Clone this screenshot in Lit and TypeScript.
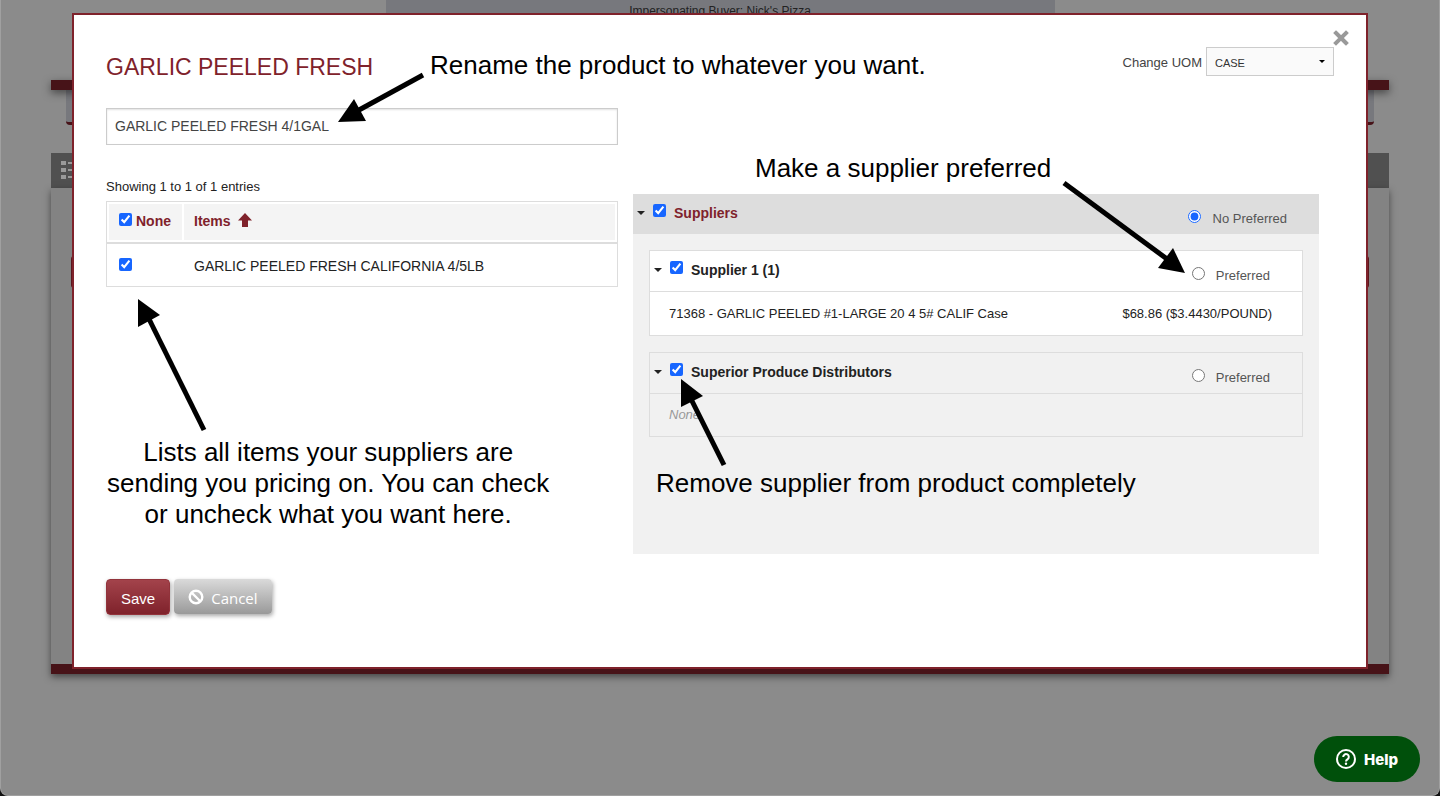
import { LitElement, html, css, svg } from "lit";
import { customElement, property } from "lit/decorators.js";

const caret = html`<svg class="caret" width="8" height="4" viewBox="0 0 8 4" aria-hidden="true">
  <path d="M0 0h8L4 4z" fill="currentColor" />
</svg>`;

interface Arrow {
  from: [number, number];
  to: [number, number];
  head: string;
}

const arrows: Arrow[] = [
  { from: [423, 75], to: [359, 110], head: "338,122 354,99 366,121" },
  { from: [1064, 183], to: [1167, 259], head: "1185,273 1173,248 1158,268" },
  { from: [204, 430], to: [149, 319], head: "138,299 160,315 138,327" },
  { from: [724, 465], to: [691, 399], head: "681,379 703,396 681,407" },
];

@customElement("supplier-card")
export class SupplierCard extends LitElement {
  @property() name = "";
  @property() item = "";
  @property() price = "";

  static styles = css`
    :host {
      display: block;
      border: 1px solid #ddd;
    }
    * {
      box-sizing: border-box;
    }
    .head {
      display: flex;
      align-items: center;
      height: 41px;
      padding: 0 32px 2px 4px;
      border-bottom: 1px solid #ddd;
    }
    .check {
      width: 13px;
      height: 13px;
      margin: 0 8px 6px 8px;
    }
    .name {
      font-size: 14px;
      font-weight: bold;
      line-height: 20px;
    }
    .preferred {
      display: flex;
      align-items: center;
      margin-left: auto;
      padding-top: 12px;
      color: #555;
      line-height: 20px;
    }
    .radio {
      width: 13px;
      height: 13px;
      margin: 0 11px 5px 0;
    }
    .row {
      display: flex;
      justify-content: space-between;
      align-items: center;
      min-height: 43px;
      padding: 0 30px 0 19px;
    }
    .empty {
      min-height: 42px;
    }
    .none {
      color: #999;
      font-style: italic;
    }
  `;

  render() {
    return html`
      <div class="head">
        ${caret}
        <input class="check" type="checkbox" id="use" checked />
        <label class="name" for="use">${this.name}</label>
        <label class="preferred"><input class="radio" type="radio" name="preferred" />Preferred</label>
      </div>
      ${this.item
        ? html`<div class="row"><span>${this.item}</span><span>${this.price}</span></div>`
        : html`<div class="row empty"><span class="none">None</span></div>`}
    `;
  }
}

@customElement("app-root")
export class AppRoot extends LitElement {
  static styles = css`
    :host {
      display: block;
      position: relative;
      min-height: 100vh;
      overflow: hidden;
      background: #111;
      color: #222;
      font: 13px/20px "Liberation Sans", Arial, sans-serif;
      accent-color: #1766ff;
    }
    * {
      box-sizing: border-box;
    }

    .page {
      min-height: 100vh;
      padding: 0 50px;
      background: #8b8b8b;
      border: solid #a0a0a0;
      border-width: 0 1px 1px;
      border-radius: 0 0 8px 8px;
    }
    .banner {
      width: 50%;
      height: 24px;
      margin: 0 auto;
      background: #77787d;
      font-size: 12px;
      line-height: 22px;
      text-align: center;
    }
    .rule {
      position: relative;
      height: 10px;
      margin-top: 56px;
      background: #471318;
      box-shadow: 0 3px 8px rgba(0, 0, 0, 0.5);
    }
    .nav {
      height: 35px;
      margin: 0 15px;
      background: #77787d;
      border-bottom: 3px solid #471318;
      border-radius: 0 0 4px 4px;
    }
    .bar {
      display: flex;
      align-items: center;
      height: 35px;
      margin-top: 28px;
      padding: 0 0 2px 10px;
      background: #505050;
      color: #999;
    }
    .panel {
      height: 486px;
      padding: 68px 20px 0;
      background: #838383;
      border-bottom: 10px solid #471318;
      box-shadow: 0 3px 7px rgba(0, 0, 0, 0.5);
    }
    .strip {
      height: 32px;
      background: #5c171e;
      border-radius: 3px;
    }

    .modal {
      position: absolute;
      top: 13px;
      left: 72px;
      right: 72px;
      padding: 32px 32px 52px;
      background: #fff;
      border: 2px solid #7f222b;
    }
    .close {
      position: absolute;
      top: 15px;
      right: 17px;
      display: flex;
      padding: 0;
      background: none;
      border: 0;
      color: #999;
    }
    .top {
      display: flex;
      justify-content: space-between;
      align-items: flex-start;
    }
    h1 {
      margin: 0;
      color: #7f222b;
      font-size: 23px;
      font-weight: normal;
      line-height: 40px;
    }
    .uom {
      display: flex;
      align-items: center;
      gap: 4px;
      color: #444;
    }
    .uom label {
      padding-top: 2px;
    }
    .select {
      display: grid;
      align-items: center;
    }
    .select > * {
      grid-area: 1 / 1;
    }
    select {
      width: 128px;
      height: 29px;
      padding: 2px 8px 0;
      appearance: none;
      background: #fafafa;
      border: 1px solid #ccc;
      border-radius: 0;
      color: #333;
      font: 11px "Liberation Sans", Arial, sans-serif;
    }
    .select .caret {
      justify-self: end;
      margin-right: 9px;
      color: #000;
      pointer-events: none;
    }

    .body {
      display: grid;
      grid-template-columns: minmax(0, 512fr) minmax(0, 686fr);
      gap: 15px;
      align-items: start;
      margin: 21px 15px 0 0;
    }
    .text {
      display: block;
      width: 100%;
      height: 37px;
      padding: 0 8px 2px;
      border: 1px solid #ccc;
      box-shadow: inset 0 1px 2px rgba(0, 0, 0, 0.12);
      color: #444;
      font: 14px "Liberation Sans", Arial, sans-serif;
    }
    .showing {
      margin: 32px 0 4px;
    }
    table {
      width: 100%;
      border: 1px solid #ddd;
      border-spacing: 0;
      table-layout: fixed;
    }
    th {
      height: 40px;
      padding: 0 10px 2px;
      background: #f4f4f4;
      border: 2px solid #fff;
      color: #7f222b;
      font-size: 14px;
      text-align: left;
    }
    th:first-child {
      width: 75px;
      border-right: 0;
    }
    td {
      height: 44px;
      padding: 0 12px;
      border-top: 2px solid #ddd;
      font-size: 14px;
    }
    .cell {
      display: flex;
      align-items: center;
    }
    .check {
      flex: none;
      width: 13px;
      height: 13px;
      margin: 0;
    }
    th .check {
      margin: 0 4px 4px 0;
    }
    td .check {
      display: block;
      margin-bottom: 2px;
    }
    td label {
      display: block;
      padding-top: 2px;
    }
    .up {
      margin: 0 0 2px 7px;
    }

    .suppliers {
      margin-top: 86px;
      background: #f1f1f1;
    }
    .shead {
      display: flex;
      align-items: center;
      height: 40px;
      padding: 0 32px 2px 4px;
      background: #ddd;
    }
    .shead .check {
      margin: 0 8px 6px 8px;
    }
    .stitle {
      color: #7f222b;
      font-size: 14px;
      font-weight: bold;
    }
    .preferred {
      display: flex;
      align-items: center;
      margin-left: auto;
      padding-top: 12px;
      color: #555;
    }
    .radio {
      width: 13px;
      height: 13px;
      margin: 0 12px 5px 0;
    }
    .cards {
      display: grid;
      align-content: start;
      gap: 16px;
      min-height: 320px;
      padding: 16px;
    }
    .live {
      background: #fff;
    }

    .actions {
      display: flex;
      align-items: flex-start;
      gap: 4px;
      margin-top: 25px;
    }
    .btn {
      display: flex;
      align-items: center;
      gap: 7px;
      height: 36px;
      padding: 3px 14px 0;
      border: 0;
      border-radius: 4px;
      box-shadow: 1px 2px 4px rgba(0, 0, 0, 0.35);
      color: #fff;
      font-size: 15px;
    }
    .save {
      background: linear-gradient(#a3434b, #7f222b);
      border: 1px solid #92333b;
      font-family: "Liberation Sans", Arial, sans-serif;
    }
    .cancel {
      height: 35px;
      background: linear-gradient(#dadada, #999);
      font-family: "Open Sans", sans-serif;
    }
    .cancel svg {
      margin-bottom: 2px;
    }

    .notes {
      position: absolute;
      top: 0;
      left: 0;
      pointer-events: none;
    }
    .note {
      position: absolute;
      margin: 0;
      color: #000;
      font-size: 26px;
      line-height: 31px;
      text-align: center;
      white-space: nowrap;
      pointer-events: none;
    }
    .rename {
      top: 50px;
      left: 430px;
    }
    .prefer {
      top: 153px;
      left: 755px;
    }
    .lists {
      top: 437px;
      left: 107px;
    }
    .remove {
      top: 468px;
      left: 656px;
    }

    .help {
      position: absolute;
      right: 20px;
      bottom: 14px;
      display: flex;
      align-items: center;
      gap: 8px;
      height: 46px;
      padding: 0 22px;
      background: #00500b;
      border: 0;
      border-radius: 23px;
      color: #fff;
      font: 800 15px Inter, sans-serif;
    }
  `;

  render() {
    return html`
      <div class="page">
        <div class="banner">Impersonating Buyer: Nick's Pizza</div>
        <div class="rule"></div>
        <div class="nav"></div>
        <div class="bar">
          <svg width="20" height="18" viewBox="0 0 20 18" fill="currentColor" aria-hidden="true">
            <path d="M0 0h5v4H0zM0 7h5v4H0zM0 14h5v4H0zM7 1h13v2H7zM7 8h13v2H7zM7 15h13v2H7z" />
          </svg>
        </div>
        <div class="panel"><div class="strip"></div></div>
      </div>

      <div class="modal" role="dialog" aria-labelledby="title">
        <button class="close" aria-label="Close">
          <svg width="16" height="16" viewBox="0 0 16 16" aria-hidden="true">
            <path d="M3 3l10 10M13 3L3 13" stroke="currentColor" stroke-width="4" stroke-linecap="square" stroke-linejoin="round" />
          </svg>
        </button>
        <div class="top">
          <h1 id="title">GARLIC PEELED FRESH</h1>
          <div class="uom">
            <label for="uom">Change UOM</label>
            <div class="select">
              <select id="uom"><option>CASE</option></select>
              <svg class="caret" width="6" height="3" viewBox="0 0 6 3" aria-hidden="true">
                <path d="M0 0h6L3 3z" fill="currentColor" />
              </svg>
            </div>
          </div>
        </div>

        <div class="body">
          <div>
            <input class="text" type="text" aria-label="Product name" .value=${"GARLIC PEELED FRESH 4/1GAL"} />
            <p class="showing">Showing 1 to 1 of 1 entries</p>
            <table>
              <thead>
                <tr>
                  <th>
                    <div class="cell">
                      <input class="check" type="checkbox" id="all" checked /><label for="all">None</label>
                    </div>
                  </th>
                  <th>
                    <div class="cell">
                      Items
                      <svg class="up" width="14" height="14" viewBox="0 0 14 14" aria-hidden="true">
                        <path d="M7 0l7 7.500h-4V14H4V7.500H0z" fill="currentColor" />
                      </svg>
                    </div>
                  </th>
                </tr>
              </thead>
              <tbody>
                <tr>
                  <td><input class="check" type="checkbox" id="row" checked /></td>
                  <td><label for="row">GARLIC PEELED FRESH CALIFORNIA 4/5LB</label></td>
                </tr>
              </tbody>
            </table>
          </div>

          <div class="suppliers">
            <div class="shead">
              ${caret}
              <input class="check" type="checkbox" id="suppliers" checked />
              <label class="stitle" for="suppliers">Suppliers</label>
              <label class="preferred"><input class="radio" type="radio" name="preferred" checked />No Preferred</label>
            </div>
            <div class="cards">
              <supplier-card
                class="live"
                name="Supplier 1 (1)"
                item="71368 - GARLIC PEELED #1-LARGE 20 4 5# CALIF Case"
                price="$68.86 ($3.4430/POUND)"
              ></supplier-card>
              <supplier-card name="Superior Produce Distributors"></supplier-card>
            </div>
          </div>
        </div>

        <div class="actions">
          <button class="btn save">Save</button>
          <button class="btn cancel">
            <svg width="16" height="16" viewBox="0 0 16 16" fill="none" stroke="#fff" stroke-width="2.400" aria-hidden="true">
              <circle cx="8" cy="8" r="6.300" />
              <path d="M3.500 3.500l9 9" />
            </svg>
            Cancel
          </button>
        </div>
      </div>

      <svg class="notes" width="1440" height="796" viewBox="0 0 1440 796" aria-hidden="true">
        ${arrows.map(
          (a) => svg`
            <line x1=${a.from[0]} y1=${a.from[1]} x2=${a.to[0]} y2=${a.to[1]} stroke="#000" stroke-width="5" />
            <polygon points=${a.head} />`
        )}
      </svg>
      <p class="note rename">Rename the product to whatever you want.</p>
      <p class="note prefer">Make a supplier preferred</p>
      <p class="note lists">Lists all items your suppliers are<br />sending you pricing on. You can check<br />or uncheck what you want here.</p>
      <p class="note remove">Remove supplier from product completely</p>

      <button class="help">
        <svg width="20" height="20" viewBox="0 0 20 20" fill="none" stroke="#fff" stroke-width="2" aria-hidden="true">
          <circle cx="10" cy="10" r="9" />
          <path d="M7.200 8a2.800 2.800 0 1 1 4.300 2.300C10.500 11 10 11.300 10 12.500" />
          <circle cx="10" cy="14.800" r="1.200" fill="#fff" stroke="none" />
        </svg>
        Help
      </button>
    `;
  }
}
